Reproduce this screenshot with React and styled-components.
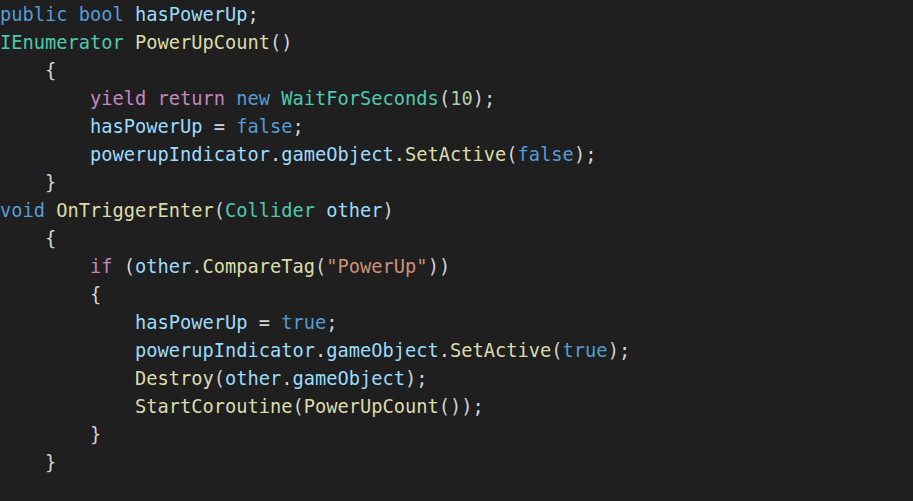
import React from "react";
import styled, { createGlobalStyle } from "styled-components";

const GlobalStyle = createGlobalStyle`
  html, body {
    margin: 0;
    padding: 0;
    background: #1f1f1f;
  }
`;

const colors = {
  kw: "#569cd6",
  ctrl: "#c586c0",
  type: "#4ec9b0",
  fn: "#dcdcaa",
  var: "#9cdcfe",
  str: "#ce9178",
  num: "#b5cea8",
  punc: "#d4d4d4",
};

const Editor = styled.div`
  width: 913px;
  height: 501px;
  box-sizing: border-box;
  padding-top: 1px;
  background: #1f1f1f;
  overflow: hidden;
  font-family: "DejaVu Sans Mono", "Liberation Mono", monospace;
  font-size: 18.7px;
`;

const Line = styled.div`
  height: 28px;
  line-height: 28px;
  white-space: pre;
  color: ${colors.punc};
`;

const Token = styled.span`
  color: ${(props) => colors[props.$kind] || colors.punc};
`;

// each line: [indent, [kind, text], ...]
const code = [
  [0, ["kw", "public"], ["punc", " "], ["kw", "bool"], ["punc", " "], ["var", "hasPowerUp"], ["punc", ";"]],
  [0, ["type", "IEnumerator"], ["punc", " "], ["fn", "PowerUpCount"], ["punc", "()"]],
  [4, ["punc", "{"]],
  [8, ["ctrl", "yield"], ["punc", " "], ["ctrl", "return"], ["punc", " "], ["kw", "new"], ["punc", " "], ["type", "WaitForSeconds"], ["punc", "("], ["num", "10"], ["punc", ");"]],
  [8, ["var", "hasPowerUp"], ["punc", " = "], ["kw", "false"], ["punc", ";"]],
  [8, ["var", "powerupIndicator"], ["punc", "."], ["var", "gameObject"], ["punc", "."], ["fn", "SetActive"], ["punc", "("], ["kw", "false"], ["punc", ");"]],
  [4, ["punc", "}"]],
  [0, ["kw", "void"], ["punc", " "], ["fn", "OnTriggerEnter"], ["punc", "("], ["type", "Collider"], ["punc", " "], ["var", "other"], ["punc", ")"]],
  [4, ["punc", "{"]],
  [8, ["ctrl", "if"], ["punc", " ("], ["var", "other"], ["punc", "."], ["fn", "CompareTag"], ["punc", "("], ["str", "\"PowerUp\""], ["punc", "))"]],
  [8, ["punc", "{"]],
  [12, ["var", "hasPowerUp"], ["punc", " = "], ["kw", "true"], ["punc", ";"]],
  [12, ["var", "powerupIndicator"], ["punc", "."], ["var", "gameObject"], ["punc", "."], ["fn", "SetActive"], ["punc", "("], ["kw", "true"], ["punc", ");"]],
  [12, ["fn", "Destroy"], ["punc", "("], ["var", "other"], ["punc", "."], ["var", "gameObject"], ["punc", ");"]],
  [12, ["fn", "StartCoroutine"], ["punc", "("], ["fn", "PowerUpCount"], ["punc", "());"]],
  [8, ["punc", "}"]],
  [4, ["punc", "}"]],
];

const App = () => (
  <>
    <GlobalStyle />
    <Editor>
      {code.map(([indent, ...tokens], i) => (
        <Line key={i}>
          {" ".repeat(indent)}
          {tokens.map(([kind, text], j) => (
            <Token key={j} $kind={kind}>
              {text}
            </Token>
          ))}
        </Line>
      ))}
    </Editor>
  </>
);

export default App;
